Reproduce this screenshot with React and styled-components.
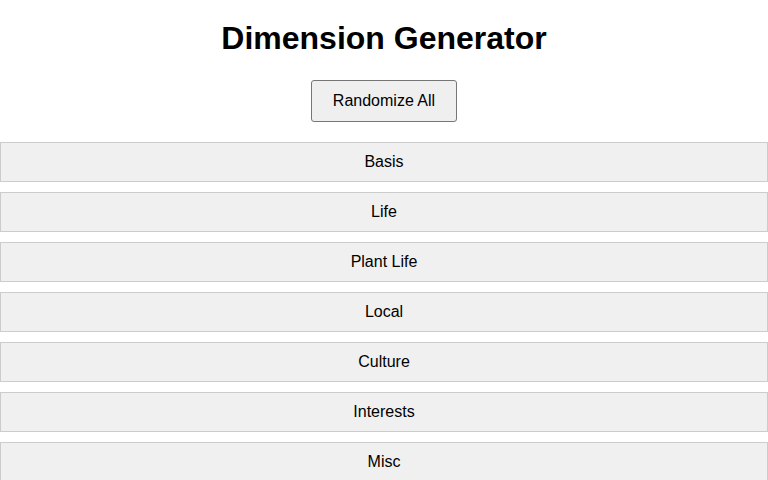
import React from "react";
import styled, { createGlobalStyle } from "styled-components";

const GlobalStyle = createGlobalStyle`
    body {
        margin: 0;
        background: #fff;
        font-family: "Liberation Sans", Arial, sans-serif;
        color: #000;
    }
`;

const Page = styled.div`
    display: flex;
    flex-direction: column;
    align-items: center;
    padding-top: 20px;
`;

const Title = styled.h1`
    margin: 0;
    font-size: 32px;
    line-height: 37px;
    font-weight: bold;
`;

const RandomButton = styled.button`
    margin-top: 23px;
    padding: 11px 21px;
    font-family: "Liberation Sans", Arial, sans-serif;
    font-size: 16px;
    line-height: 18px;
    color: #000;
    background: #efefef;
    border: 1px solid #767676;
    border-radius: 3px;
    cursor: pointer;
`;

const SectionList = styled.div`
    margin-top: 20px;
    width: 100%;
    display: flex;
    flex-direction: column;
    gap: 10px;
`;

const Section = styled.div`
    box-sizing: border-box;
    height: 40px;
    display: flex;
    align-items: center;
    justify-content: center;
    background: #f0f0f0;
    border: 1px solid #ccc;
    font-size: 16px;
    cursor: pointer;
`;

const sections = ["Basis", "Life", "Plant Life", "Local", "Culture", "Interests", "Misc"];

const App = () => {
    return (
        <>
            <GlobalStyle />
            <Page>
                <Title>Dimension Generator</Title>
                <RandomButton>Randomize All</RandomButton>
                <SectionList>
                    {sections.map((name) => (
                        <Section key={name}>{name}</Section>
                    ))}
                </SectionList>
            </Page>
        </>
    );
};

export default App;
